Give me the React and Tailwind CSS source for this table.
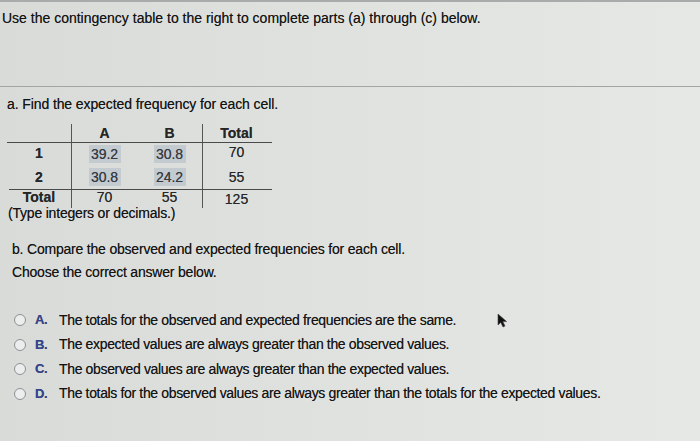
import React from 'react'

const options = [
  { letter: 'A.', text: 'The totals for the observed and expected frequencies are the same.' },
  { letter: 'B.', text: 'The expected values are always greater than the observed values.' },
  { letter: 'C.', text: 'The observed values are always greater than the expected values.' },
  { letter: 'D.', text: 'The totals for the observed values are always greater than the totals for the expected values.' },
]

const cols = 'grid grid-cols-[65px_65px_66px_67px]'

function Box({ children }) {
  return (
    <span className="w-[32px] h-[18px] bg-[#c3cad0] flex items-center justify-center text-[#353a41]">
      {children}
    </span>
  )
}

export default function App() {
  return (
    <div
      className="relative w-[700px] h-[441px] overflow-hidden bg-gradient-to-r from-[#d9dbd8] via-[#e0e2df] to-[#e6e8e5] text-[#141414] [text-shadow:0_0_0.5px_rgba(0,0,0,0.55)]"
      style={{ fontFamily: '"Liberation Sans", Arial, sans-serif' }}
    >
      {/* top edge */}
      <div className="h-[2px] bg-[#a9abaa]" />

      <p className="ml-[2px] mt-[8px] text-[14px] leading-[16px]">
        Use the contingency table to the right to complete parts (a) through (c) below.
      </p>

      <div className="mt-[60px] h-px bg-[#a3a5a3]" />

      {/* part a */}
      <div className="pl-[7px]">
        <p className="mt-[9px] text-[14px] leading-[16px] tracking-[-0.1px]">
          a. Find the expected frequency for each cell.
        </p>

        <div className="mt-[12px] w-[265px] text-[14px] text-[#262626]">
          <div className={`${cols} h-[18px] items-end`}>
            <div className="border-r border-[#555] h-full" />
            <div className="flex justify-center font-bold leading-[15px] pb-[1px]">A</div>
            <div className="flex justify-center font-bold leading-[15px] pb-[1px] border-r border-[#555] h-full items-end">B</div>
            <div className="flex justify-center font-bold leading-[15px] pb-[1px]">Total</div>
          </div>
          <div className="h-px bg-[#4a4a4a]" />
          <div className={`${cols} h-[22px]`}>
            <div className="flex items-center justify-center font-bold border-r border-[#555] -mt-[2px]">1</div>
            <div className="flex items-center justify-center"><Box>39.2</Box></div>
            <div className="flex items-center justify-center border-r border-[#555]"><Box>30.8</Box></div>
            <div className="flex items-center justify-center -mt-[4px]">70</div>
          </div>
          <div className={`${cols} h-[24px]`}>
            <div className="flex items-center justify-center font-bold border-r border-[#555]">2</div>
            <div className="flex items-center justify-center"><Box>30.8</Box></div>
            <div className="flex items-center justify-center border-r border-[#555]"><Box>24.2</Box></div>
            <div className="flex items-center justify-center">55</div>
          </div>
          <div className="h-px bg-[#4a4a4a] ml-[2px]" />
          <div className={`${cols} h-[15px] leading-[15px]`}>
            <div className="flex justify-center font-bold border-r border-[#555]">Total</div>
            <div className="flex justify-center">70</div>
            <div className="flex justify-center border-r border-[#555] h-[18px]">55</div>
            <div className="flex justify-center pt-[2px]">125</div>
          </div>
        </div>

        <p className="ml-[1px] text-[14px] leading-[16px] tracking-[-0.2px]">(Type integers or decimals.)</p>
      </div>

      {/* part b */}
      <div className="pl-[12px]">
        <p className="mt-[20px] text-[14px] leading-[16px] tracking-[-0.2px]">
          b. Compare the observed and expected frequencies for each cell.
        </p>
        <p className="mt-[7px] text-[14px] leading-[16px] tracking-[-0.2px]">Choose the correct answer below.</p>
      </div>

      <div className="mt-[32px] pl-[14px] flex flex-col gap-[8.5px]">
        {options.map((o) => (
          <div key={o.letter} className="flex items-center h-[16px] text-[14px] tracking-[-0.35px]">
            <span className="w-[12px] h-[12px] rounded-full border-[1.5px] border-[#8c9196] bg-[#eceeed] shrink-0" />
            <span className="ml-[9px] w-[24px] font-bold text-[13px] text-[#34448e]">{o.letter}</span>
            <span>{o.text}</span>
          </div>
        ))}
      </div>

      {/* mouse pointer */}
      <svg className="absolute left-[497px] top-[313px]" width="11" height="15" viewBox="0 0 11 15">
        <path d="M1 1 L1 12 L3.8 9.4 L6 14 L8 13 L5.8 8.6 L9.6 8.6 Z" fill="#111" stroke="#444" strokeWidth="0.6" />
      </svg>
    </div>
  )
}
